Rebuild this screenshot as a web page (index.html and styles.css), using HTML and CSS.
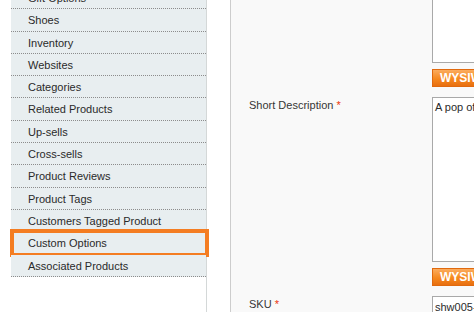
FILE: index.html
```html
<!DOCTYPE html>
<html lang="en">
<head>
  <meta charset="UTF-8" />
  <title>Product Information</title>
  <link rel="stylesheet" href="styles.css">
</head>
<body>
  <aside class="side">
    <ul class="tabs">
      <li>Gift Options</li>
      <li>Shoes</li>
      <li>Inventory</li>
      <li>Websites</li>
      <li>Categories</li>
      <li>Related Products</li>
      <li>Up-sells</li>
      <li>Cross-sells</li>
      <li>Product Reviews</li>
      <li>Product Tags</li>
      <li>Customers Tagged Product</li>
      <li class="marked">Custom Options</li>
      <li>Associated Products</li>
    </ul>
  </aside>

  <main class="content">
    <div class="row first">
      <div class="label"></div>
      <div class="value">
        <textarea class="area top-area"></textarea>
        <button class="wysiwyg">WYSIWYG Editor</button>
      </div>
    </div>

    <div class="row">
      <div class="label">Short Description <span class="req">*</span></div>
      <div class="value">
        <textarea class="area desc-area">A pop of color for any outfit</textarea>
        <button class="wysiwyg">WYSIWYG Editor</button>
      </div>
    </div>

    <div class="row">
      <div class="label">SKU <span class="req">*</span></div>
      <div class="value">
        <input class="text" type="text" value="shw005-blue">
      </div>
    </div>
  </main>
</body>
</html>
```

FILE: styles.css
```css
body {
  margin: 0;
  height: 312px;
  overflow: hidden;
  display: flex;
  background: #fff;
  font-family: "Liberation Sans", Arial, sans-serif;
  font-size: 11px;
  color: #2a2a2a;
}

.side {
  width: 195px;
  padding-left: 11px;
  border-right: 1px solid #d4d8d8;
  flex-shrink: 0;
}

.tabs {
  list-style: none;
  margin: -13px 0 0;
  padding: 0;
}

.tabs li {
  position: relative;
  height: 21.3px;
  line-height: 22px;
  padding-left: 17px;
  background: #e8eef0;
  border-bottom: 1px dotted #8c8c8c;
  white-space: nowrap;
}

.tabs li.marked::after {
  content: "";
  position: absolute;
  top: -3px;
  bottom: -3px;
  left: -1px;
  right: -3px;
  border: 4px solid #f47d22;
}

.content {
  margin-left: 23px;
  flex: 1;
  border-left: 1px solid #cdcdcd;
  background: #f9f9f9;
  min-width: 0;
}

.row {
  display: flex;
  margin-top: 10px;
}

.row.first {
  margin-top: -60px;
}

.label {
  width: 183px;
  padding-left: 18px;
  padding-top: 2px;
  flex-shrink: 0;
  color: #363636;
}

.req {
  color: #eb340a;
}

.value {
  width: 300px;
  flex-shrink: 0;
  display: flex;
  flex-direction: column;
  align-items: flex-start;
}

.area {
  display: block;
  box-sizing: border-box;
  width: 300px;
  margin: 0;
  padding: 2px 2px;
  border: 1px solid #a9a9a9;
  background: #fff;
  font-family: "Liberation Sans", Arial, sans-serif;
  font-size: 11px;
  line-height: 14px;
  color: #2a2a2a;
  resize: none;
  overflow: hidden;
}

.top-area {
  height: 123px;
}

.desc-area {
  height: 165px;
}

.wysiwyg {
  margin-top: 6px;
  height: 18px;
  padding: 0 7px;
  border: 1px solid #e0690e;
  background: linear-gradient(#fbac5e, #f6891f 55%, #e86f10);
  color: #fff;
  font-family: "Liberation Sans", Arial, sans-serif;
  font-size: 12px;
  font-weight: bold;
  white-space: nowrap;
}

.text {
  box-sizing: border-box;
  width: 300px;
  height: 22px;
  margin: 0;
  padding: 1px 2px;
  border: 1px solid #a9a9a9;
  background: #fff;
  font-family: "Liberation Sans", Arial, sans-serif;
  font-size: 11px;
  color: #2a2a2a;
}
```
